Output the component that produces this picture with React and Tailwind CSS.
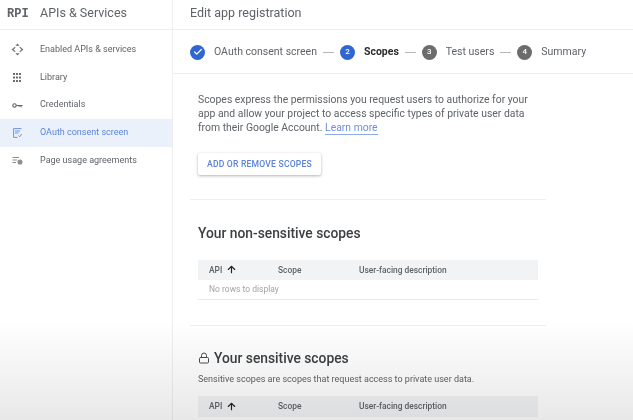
import { ArrowUp, Check, Lock } from 'lucide-react'

const navItems = [
  { label: 'Enabled APIs & services', icon: 'enabled' },
  { label: 'Library', icon: 'library' },
  { label: 'Credentials', icon: 'key' },
  { label: 'OAuth consent screen', icon: 'consent', active: true },
  { label: 'Page usage agreements', icon: 'usage' },
]

function NavIcon({ type }) {
  if (type === 'enabled') {
    return (
      <svg width="13" height="13" viewBox="0 0 13 13" fill="none" stroke="#6b6f73" strokeWidth="1.1">
        <path d="M6.5.6 8.6 2.8H4.4ZM6.5 12.4 8.6 10.2H4.4ZM.6 6.5 2.8 4.4V8.6ZM12.4 6.5 10.2 4.4V8.6Z" fill="#6b6f73" stroke="none" />
        <path d="M4.2 4.2 2.8 5.6M8.8 4.2 10.2 5.6M4.2 8.8 2.8 7.4M8.8 8.8 10.2 7.4" />
      </svg>
    )
  }
  if (type === 'library') {
    return (
      <svg width="10" height="11" viewBox="0 0 10 11" fill="#6b6f73">
        <path d="M1 1h2v2H1zM4 1h2v2H4zM7 1h2v2H7zM1 4.5h2v2H1zM4 4.5h2v2H4zM7 4.5h2v2H7zM1 8h2v2H1zM4 8h2v2H4zM7 8h2v2H7z" />
      </svg>
    )
  }
  if (type === 'key') {
    return (
      <svg width="11" height="7" viewBox="0 0 11 7" fill="none" stroke="#5f6368" strokeWidth="1.1">
        <circle cx="2.5" cy="3.5" r="1.7" />
        <path d="M4.2 3.5H10.5M9 3.5V5.3M7.2 3.5V4.8" />
      </svg>
    )
  }
  if (type === 'consent') {
    return (
      <svg width="9" height="10" viewBox="0 0 9 10" fill="none" stroke="#6f93dc" strokeWidth="1">
        <path d="M8.5 .6H.6V9.4H4.5M2 3H7M2 5H5.5M5.5 7.5 6.8 8.8 8.6 6" />
      </svg>
    )
  }
  return (
    <svg width="11" height="9" viewBox="0 0 11 9" fill="none" stroke="#8a8d90" strokeWidth="1.1">
      <path d="M.5 1.5H7M.5 4H5M.5 6.5H4" />
      <circle cx="8" cy="6" r="2" fill="#8a8d90" />
    </svg>
  )
}

function Step({ n, label, done, current }) {
  const circle = done || current ? 'bg-[#2f66d0]' : 'bg-[#6c6c6c]'
  return (
    <div className="flex items-center">
      <span className={`flex h-[15px] w-[15px] items-center justify-center rounded-full text-[8px] font-medium text-white ${circle}`}>
        {done ? <Check size={10} strokeWidth={3} /> : n}
      </span>
      <span className={`ml-[9px] text-[10.5px] ${current ? 'font-bold text-[#2b2b2b]' : 'text-[#5f6368]'}`}>{label}</span>
    </div>
  )
}

function StepLine() {
  return <span className="mx-[6px] h-px w-[11px] bg-[#b5b8bb]" />
}

function ScopeHeader({ tall }) {
  return (
    <div className={`flex items-center bg-[#f1f3f4] pl-[11px] text-[8.4px] font-medium text-[#5f6368] ${tall ? 'h-[21px]' : 'h-[20px]'}`}>
      <span className="flex w-[69px] items-center gap-[4px]">
        API
        <ArrowUp size={11} strokeWidth={2.5} className="text-[#202124]" />
      </span>
      <span className="w-[81px]">Scope</span>
      <span>User-facing description</span>
    </div>
  )
}

export default function App() {
  return (
    <div className="relative flex h-[420px] w-[633px] overflow-hidden bg-white font-['Roboto',sans-serif] blur-[0.4px]">
      <aside className="w-[173px] shrink-0 border-r border-[#eeeeee]">
        <div className="flex h-[30px] items-center border-b border-[#eeeeee] pb-[2px]">
          <span className="ml-[7px] w-[33px] font-['Liberation_Mono',monospace] text-[12px] font-bold text-[#5f6368]">RPI</span>
          <span className="text-[12.5px] text-[#5f6368]">APIs &amp; Services</span>
        </div>
        <nav className="pt-[6px]">
          {navItems.map((item) => (
            <div
              key={item.label}
              className={`flex h-[27.7px] items-center text-[9px] ${item.active ? 'bg-[#eaf1fb] text-[#5b85dc]' : 'text-[#5f6368]'}`}
            >
              <span className="flex w-[40px] justify-center pr-[6px]">
                <NavIcon type={item.icon} />
              </span>
              {item.label}
            </div>
          ))}
        </nav>
      </aside>

      <main className="min-w-0 flex-1">
        <div className="flex h-[30px] items-center border-b border-[#eeeeee] pb-[2px] pl-[17px] text-[12.5px] text-[#5f6368]">
          Edit app registration
        </div>
        <div className="flex h-[44px] items-center border-b border-[#eeeeee] pl-[17px] pt-[1px]">
          <Step label="OAuth consent screen" done />
          <StepLine />
          <Step n="2" label="Scopes" current />
          <StepLine />
          <Step n="3" label="Test users" />
          <StepLine />
          <Step n="4" label="Summary" />
        </div>

        <div className="w-[373px] pl-[17px]">
          <div className="border-b border-[#eeeeee] pb-[24px] pl-[8px] pt-[19px]">
            <p className="w-[345px] text-[10.4px] leading-[14px] text-[#5f6368]">
              Scopes express the permissions you request users to authorize for your app and allow your project to access specific types of private user data from their Google Account.{' '}
              <span className="border-b border-[#8fabe6] text-[#6b8fdc]">Learn more</span>
            </p>
            <button className="mt-[18px] flex h-[22px] w-[123px] items-center justify-center rounded-[2px] bg-white text-[8.6px] font-medium tracking-[0.2px] text-[#5b82d8] shadow-[0_1px_3px_rgba(60,64,67,0.4)]">
              ADD OR REMOVE SCOPES
            </button>
          </div>

          <div className="border-b border-[#eeeeee] pb-[25px] pl-[8px] pr-[8px] pt-[24px]">
            <h2 className="text-[13.8px] font-medium leading-[18px] text-[#3c4043]">Your non-sensitive scopes</h2>
            <div className="mt-[18px]">
              <ScopeHeader />
              <div className="flex h-[20px] items-center border-b border-[#e8eaed] pl-[11px] text-[8.5px] text-[#a0a3a6]">
                No rows to display
              </div>
            </div>
          </div>

          <div className="pl-[8px] pr-[8px] pt-[23px]">
            <h2 className="flex items-center gap-[4px] text-[13.8px] font-medium leading-[18px] text-[#3c4043]">
              <Lock size={12} strokeWidth={2} className="text-[#4a4d50]" />
              Your sensitive scopes
            </h2>
            <p className="mt-[6px] text-[9px] leading-[12px] text-[#5f6368]">
              Sensitive scopes are scopes that request access to private user data.
            </p>
            <div className="mt-[11px]">
              <ScopeHeader tall />
            </div>
          </div>
        </div>
      </main>

      <div className="pointer-events-none absolute inset-x-0 bottom-0 h-[100px] bg-gradient-to-b from-transparent to-[rgba(0,0,0,0.09)]" />
    </div>
  )
}
